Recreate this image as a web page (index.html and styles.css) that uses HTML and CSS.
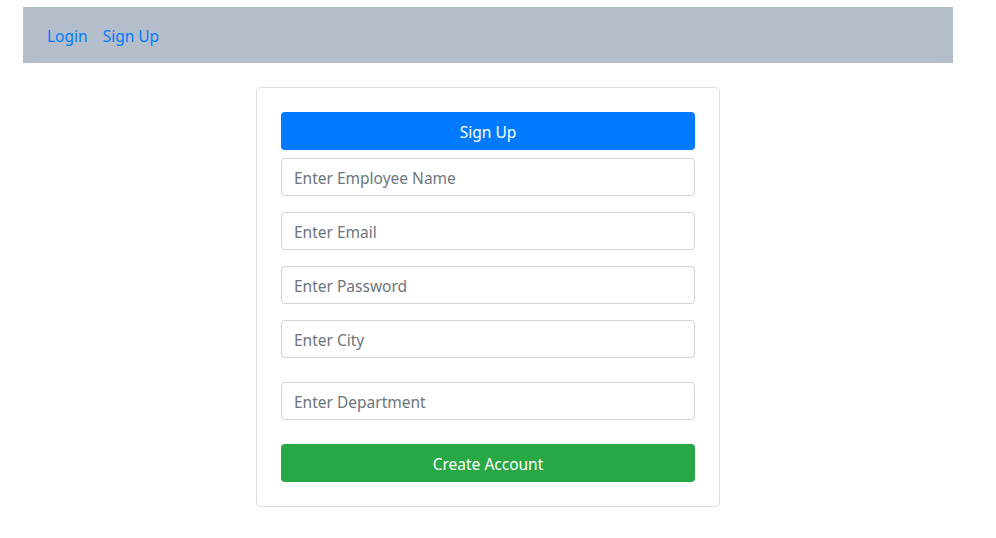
FILE: index.html
```html
<!DOCTYPE html>
<html>
<head>
    <meta charset="UTF-8">
    <meta name="viewport" content="width=device-width, initial-scale=1.0">
    <title>Sign Up</title>
    <link rel="stylesheet" href="styles.css">
</head>
<body>
    <nav class="navbar">
        <a href="#" class="nav-link">Login</a>
        <a href="#" class="nav-link">Sign Up</a>
    </nav>
    <div class="card">
        <button class="btn btn-primary">Sign Up</button>
        <input class="field first" type="text" placeholder="Enter Employee Name">
        <input class="field" type="email" placeholder="Enter Email">
        <input class="field" type="password" placeholder="Enter Password">
        <input class="field" type="text" placeholder="Enter City">
        <input class="field dept" type="text" placeholder="Enter Department">
        <button class="btn btn-success">Create Account</button>
    </div>
</body>
</html>
```

FILE: styles.css
```css
* { box-sizing: border-box; }
body { margin: 0; padding: 7px 0 0 23px; font-family: "Segoe UI", "Noto Sans", sans-serif; font-size: 15.5px; color: #212529; background: #fff; }
.navbar { width: 930px; height: 56px; background-color: #b4bdca; display: flex; align-items: center; padding: 1px 24px 0; gap: 15px; }
.nav-link { color: #007bff; text-decoration: none; }
.card { width: 464px; margin: 24px 0 0 233px; border: 1px solid #dfdfdf; border-radius: 4px; padding: 24px; display: flex; flex-direction: column; }
.btn { height: 38px; border: none; border-radius: 4px; color: #fff; font-family: inherit; font-size: 15.5px; padding: 1px 0 0; cursor: pointer; }
.btn-primary { background-color: #007bff; }
.btn-success { background-color: #28a745; margin-top: 24px; }
.field { height: 38px; border: 1px solid #ced4da; border-radius: 4px; padding: 2px 12px 0; font-family: inherit; font-size: 15.5px; margin-top: 16px; }
.field.first { margin-top: 8px; }
.field.dept { margin-top: 24px; }
.field::placeholder { color: #6c757d; }
```
